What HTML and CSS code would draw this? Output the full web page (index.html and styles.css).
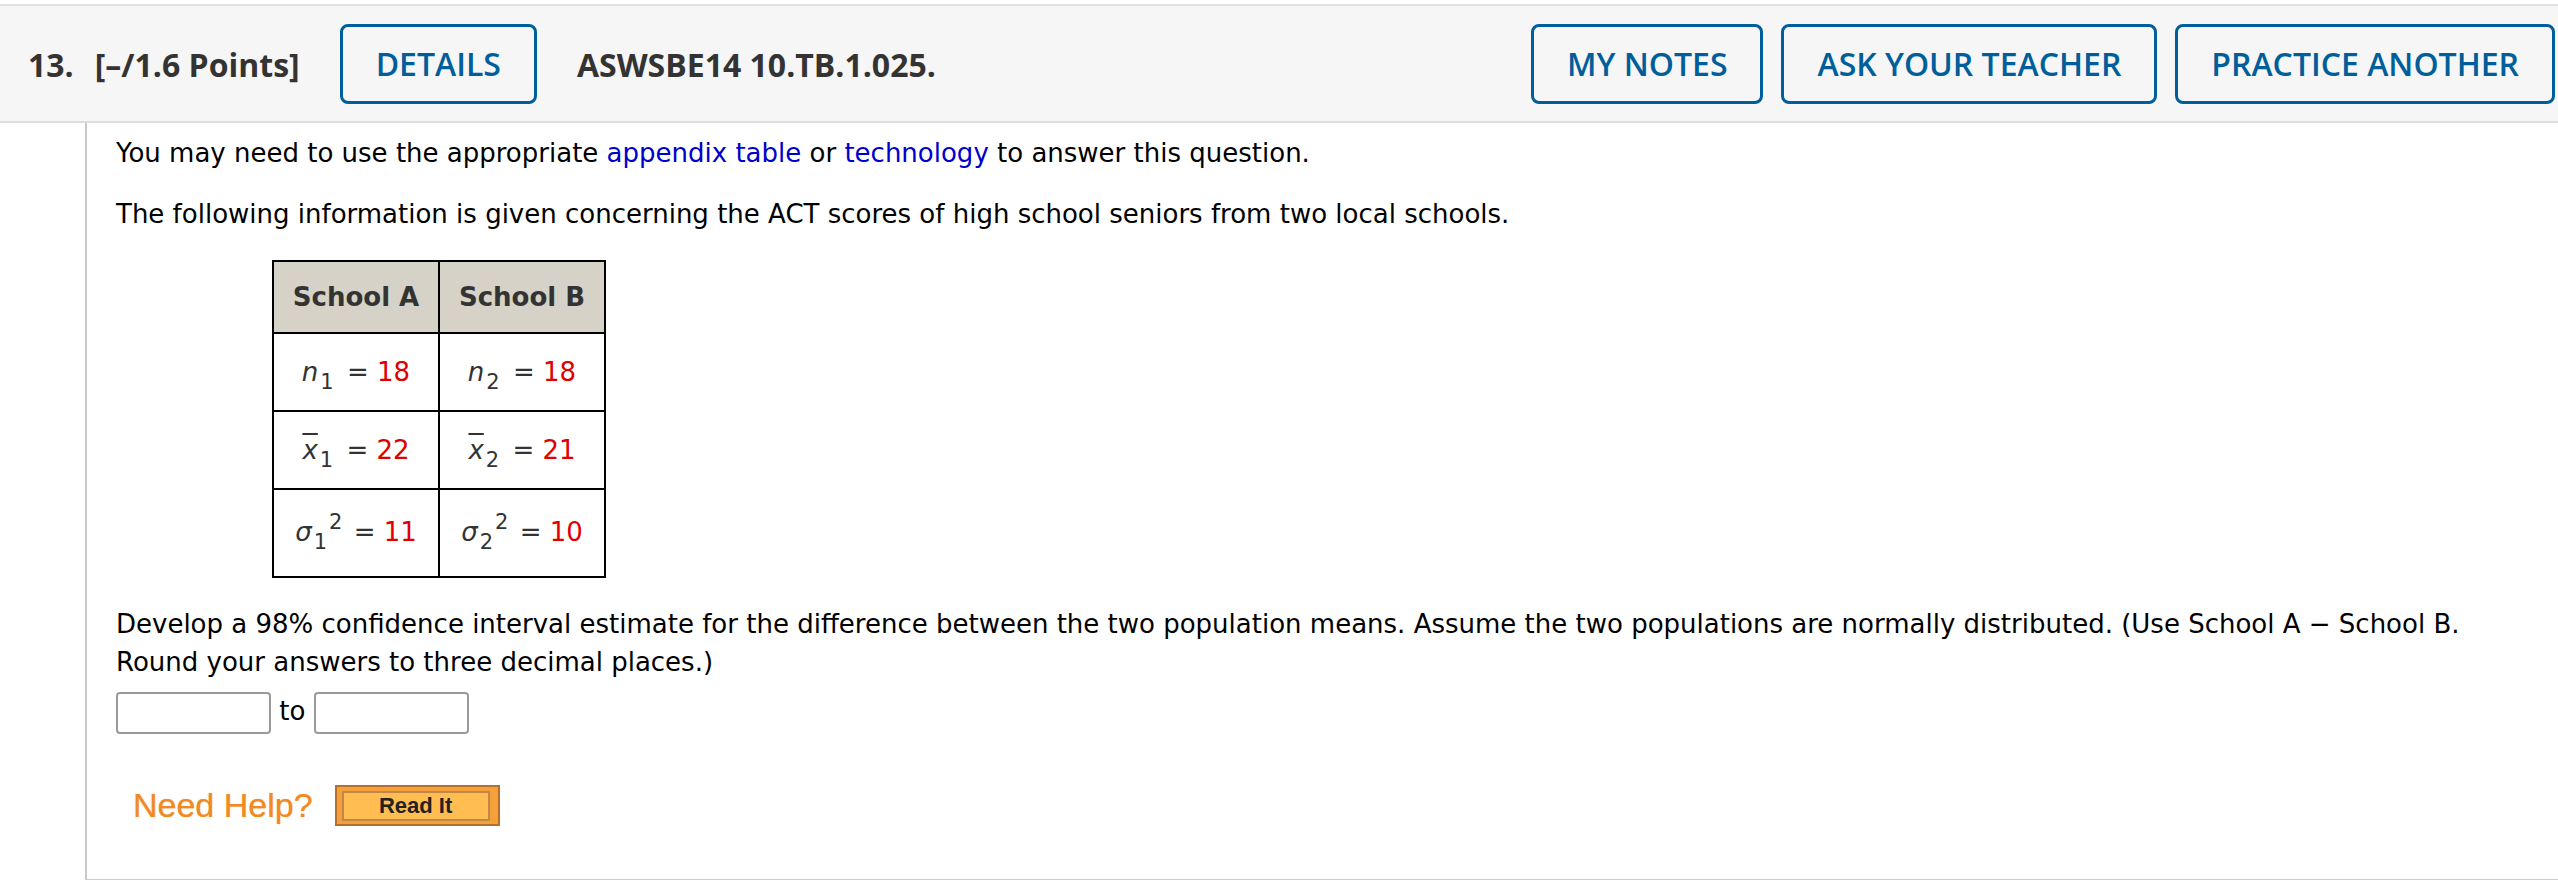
FILE: index.html
```html
<!DOCTYPE html>
<html lang="en">
<head>
	<title>Question 13</title>
	<link rel="stylesheet" href="styles.css">
</head>
<body>

<div class="question">
	<div class="qhead">
		<div class="qhead-left">
			<span class="qtitle"><span class="qnum">13.</span>[–/1.6 Points]</span>
			<button class="hbtn">DETAILS</button>
			<span class="qtitle">ASWSBE14 10.TB.1.025.</span>
		</div>
		<div class="qhead-right">
			<button class="hbtn">MY NOTES</button>
			<button class="hbtn">ASK YOUR TEACHER</button>
			<button class="hbtn">PRACTICE ANOTHER</button>
		</div>
	</div>

	<div class="qbody">
		<p>You may need to use the appropriate <a href="#">appendix table</a> or <a href="#">technology</a> to answer this question.</p>

		<p>The following information is given concerning the ACT scores of high school seniors from two local schools.</p>

		<table class="data">
			<tr>
				<th>School A</th>
				<th>School B</th>
			</tr>
			<tr>
				<td><i>n</i><sub>1</sub> = <span class="val">18</span></td>
				<td><i>n</i><sub>2</sub> = <span class="val">18</span></td>
			</tr>
			<tr>
				<td><i class="bar">x</i><sub>1</sub> = <span class="val">22</span></td>
				<td><i class="bar">x</i><sub>2</sub> = <span class="val">21</span></td>
			</tr>
			<tr class="tall">
				<td><i>σ</i><sub>1</sub><sup>2</sup> = <span class="val">11</span></td>
				<td><i>σ</i><sub>2</sub><sup>2</sup> = <span class="val">10</span></td>
			</tr>
		</table>

		<p class="task">Develop a 98% confidence interval estimate for the difference between the two population means. Assume the two populations are normally distributed. (Use School A − School B. Round your answers to three decimal places.)</p>

		<div class="answer">
			<input type="text" class="ans"> to <input type="text" class="ans">
		</div>

		<div class="help">
			<span class="help-label">Need Help?</span>
			<button class="readit"><span>Read It</span></button>
		</div>
	</div>
</div>

</body>
</html>
```

FILE: styles.css
```css
body {
	margin: 0;
	background: #fff;
	font-family: "DejaVu Sans", Verdana, sans-serif;
	color: #000;
}

.qhead {
	display: flex;
	justify-content: space-between;
	align-items: center;
	margin-top: 4px;
	padding: 18px 3px 17px 28px;
	background: #f6f6f6;
	border-top: 2px solid #e2e2e2;
	border-bottom: 2px solid #dddddd;
}

.qhead-left,
.qhead-right {
	display: flex;
	align-items: center;
}

.qhead-left {
	gap: 40px;
}

.qhead-right {
	gap: 18px;
}

.qtitle {
	font-family: "Open Sans", "Liberation Sans", sans-serif;
	font-weight: bold;
	font-size: 32px;
	color: #333;
}

.qnum {
	margin-right: 21px;
}

.hbtn {
	font-family: "Open Sans", "Liberation Sans", sans-serif;
	font-weight: 600;
	font-size: 32px;
	line-height: 44px;
	padding: 15px 33px;
	color: #005f9a;
	background: transparent;
	border: 3px solid #005f9a;
	border-radius: 8px;
}

.qbody {
	margin-left: 85px;
	padding: 11px 50px 53px 29px;
	border-left: 2px solid #c8c8c8;
	border-bottom: 2px solid #cccccc;
	font-size: 26px;
	line-height: 38px;
}

.qbody p {
	margin: 0 0 23px;
}

.qbody a {
	color: #0000cc;
	text-decoration: none;
}

.data {
	border-collapse: collapse;
	margin: 27px 0 27px 156px;
	color: #333;
}

.data th,
.data td {
	border: 2px solid #000;
	text-align: center;
	padding: 19px 0;
}

.data th {
	width: 164px;
	padding: 16px 0;
	background: #d6d2c7;
	font-weight: bold;
}

.data tr.tall td {
	padding: 23px 0 25px;
}

.data sub,
.data sup {
	font-size: 21px;
	line-height: 0;
}

.data sub {
	vertical-align: -8px;
	margin: 0 5px 0 2px;
}

.data sup {
	vertical-align: 12px;
	margin-left: -3px;
	margin-right: 3px;
}

.val {
	color: #e00000;
}

.bar {
	text-decoration: overline;
	text-decoration-thickness: 2px;
}

.qbody p.task {
	margin: 0;
}

.answer {
	margin-top: 9px;
	line-height: 42px;
}

.ans {
	width: 155px;
	height: 42px;
	box-sizing: border-box;
	margin: 0;
	border: 2px solid #9a9a9a;
	border-radius: 4px;
	vertical-align: middle;
}

.help {
	display: flex;
	align-items: center;
	gap: 22px;
	margin-top: 51px;
	padding-left: 17px;
}

.help-label {
	font-family: "Liberation Sans", Arial, sans-serif;
	font-size: 34px;
	line-height: 41px;
	color: #f08a24;
	text-shadow: 0 0 1px rgba(240, 138, 36, .7);
}

.readit {
	width: 165px;
	height: 41px;
	padding: 4px 8px 3px 5px;
	background: #f6a03a;
	border: 2px solid #b5702d;
	border-radius: 0;
}

.readit span {
	display: block;
	height: 100%;
	box-sizing: border-box;
	border: 2px solid #c08848;
	background: #ffbd52;
	font-family: "Liberation Sans", Arial, sans-serif;
	font-weight: bold;
	font-size: 22px;
	line-height: 26px;
	color: #222;
}
```
